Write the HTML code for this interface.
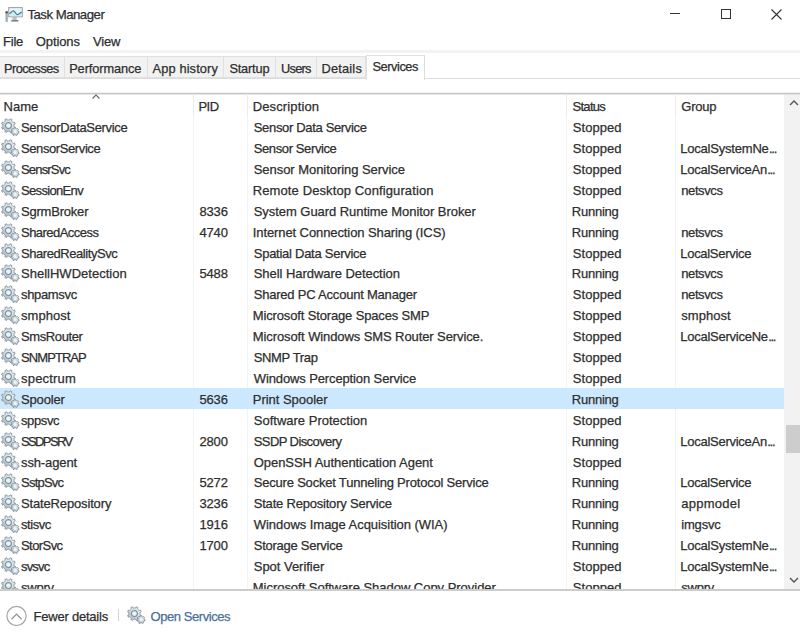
<!DOCTYPE html>
<html><head><meta charset="utf-8">
<style>
*{margin:0;padding:0;box-sizing:border-box}
html,body{width:800px;height:639px;overflow:hidden;background:#fff}
body{position:relative;font-family:"Liberation Sans",sans-serif;font-size:13px;color:#2e2e2e;-webkit-text-stroke:0.25px currentColor}
.abs{position:absolute;white-space:nowrap}
.t{position:absolute;white-space:nowrap}
#grid{position:absolute;left:0;top:0;width:784px;height:589.5px;overflow:hidden}
.row{position:absolute;left:0;width:784px;height:20.5px}
.row.sel{background:transparent}
.c{position:absolute;white-space:nowrap;font-size:13px;line-height:20px}
.el{letter-spacing:-1.25px;margin-left:0.3px}
.gi{position:absolute;left:0.3px;top:0.3px}
.vsep{position:absolute;top:94px;width:1px;height:495px;background:#f3f3f3}
.tab{position:absolute;top:56.3px;height:22.2px;background:#f2f2f2;border:1px solid #e0e0e0;border-right:none}
</style></head><body>
<svg width="0" height="0" style="position:absolute">
 <defs>
  <linearGradient id="gg" x1="1" y1="0" x2="0" y2="1">
   <stop offset="0" stop-color="#eef5f8"/><stop offset="0.5" stop-color="#d3dee4"/><stop offset="1" stop-color="#9fadb8"/>
  </linearGradient>
  <g id="gear">
   <path fill="url(#gg)" stroke="#8a98a3" stroke-width="0.9" d="M13.99,8.93 L13.89,9.69 L15.19,10.30 L14.40,12.20 L13.06,11.71 L12.12,12.79 L11.51,13.26 L12.00,14.60 L10.10,15.39 L9.49,14.09 L8.07,14.19 L7.31,14.09 L6.70,15.39 L4.80,14.60 L5.29,13.26 L4.21,12.32 L3.74,11.71 L2.40,12.20 L1.61,10.30 L2.91,9.69 L2.81,8.27 L2.91,7.51 L1.61,6.90 L2.40,5.00 L3.74,5.49 L4.68,4.41 L5.29,3.94 L4.80,2.60 L6.70,1.81 L7.31,3.11 L8.73,3.01 L9.49,3.11 L10.10,1.81 L12.00,2.60 L11.51,3.94 L12.59,4.88 L13.06,5.49 L14.40,5.00 L15.19,6.90 L13.89,7.51 Z"/>
   <circle cx="8.4" cy="8.6" r="3.0" fill="#e8f5fa" stroke="#7f8e99" stroke-width="1.1"/>
   <path fill="url(#gg)" stroke="#84929d" stroke-width="0.9" d="M18.15,14.02 L18.20,14.52 L19.10,14.73 L18.83,16.08 L17.92,15.92 L17.41,16.70 L17.06,17.05 L17.45,17.88 L16.23,18.51 L15.79,17.70 L14.86,17.80 L14.36,17.74 L13.96,18.57 L12.71,18.00 L13.07,17.15 L12.41,16.49 L12.15,16.06 L11.25,16.26 L10.91,14.93 L11.80,14.68 L11.91,13.75 L12.08,13.28 L11.36,12.70 L12.19,11.61 L12.94,12.15 L13.74,11.66 L14.21,11.50 L14.21,10.58 L15.59,10.54 L15.64,11.46 L16.51,11.78 L16.93,12.05 L17.66,11.48 L18.54,12.53 L17.85,13.14 Z"/>
   <circle cx="15.0" cy="14.6" r="1.4" fill="#eef7fa"/>
  </g>
 </defs>
</svg>

<!-- title bar -->
<svg class="abs" style="left:0;top:0" width="30" height="26" viewBox="0 0 30 26">
 <rect x="8.7" y="7.6" width="13.6" height="9.2" fill="#e4f4f8" stroke="#9c9fa2" stroke-width="1"/>
 <path d="M9.4,16.3 L9.4,13.8 C11,12.6 12,10.8 13.4,10.9 C15,11 16,14.8 17.5,14.7 C19,14.6 20,12.6 21.8,12.2 L21.8,16.3 Z" fill="#c8eef6"/>
 <path d="M9.4,13.8 C11,12.6 12,10.8 13.4,10.9 C15,11 16,14.8 17.5,14.7 C19,14.6 20,12.6 21.8,12.2" fill="none" stroke="#5d7f8c" stroke-width="1.3"/>
 <rect x="12.5" y="17" width="4.2" height="3.3" fill="#b9c0c5"/>
 <rect x="11.3" y="20" width="7" height="1.6" fill="#7c8186"/>
 <rect x="5.5" y="11.5" width="2.3" height="10.4" fill="#a6a9ac"/>
 <rect x="5.5" y="11.3" width="2.3" height="2" fill="#4d5052"/>
</svg>
<div class="abs" style="left:670px;top:12.5px;width:10px;height:1px;background:#333"></div>
<div class="abs" style="left:720.5px;top:9px;width:10px;height:10px;border:1px solid #333"></div>
<svg class="abs" style="left:771px;top:8.5px" width="11" height="11" viewBox="0 0 11 11"><path d="M0.5,0.5 L10.5,10.5 M10.5,0.5 L0.5,10.5" stroke="#333" stroke-width="1.1"/></svg>

<div class="abs" style="left:0;top:49.6px;width:800px;height:3.2px;background:#f3f3f3"></div>

<!-- tabs -->
<div class="abs" style="left:0;top:77.8px;width:800px;height:1px;background:#dcdcdc"></div>
<div class="tab" style="left:-1px;width:65px"></div>
<div class="tab" style="left:64px;width:83px"></div>
<div class="tab" style="left:146.5px;width:76.5px"></div>
<div class="tab" style="left:223px;width:52px"></div>
<div class="tab" style="left:275px;width:41px"></div>
<div class="tab" style="left:316px;width:50px;border-right:1px solid #e0e0e0"></div>
<div class="tab" style="left:365.5px;top:55px;width:59.5px;height:24.5px;background:#fff;border-right:1px solid #dcdcdc;border-bottom:none"></div>

<!-- header -->
<div class="abs" style="left:0;top:93px;width:800px;height:1px;background:#c6c6c6"></div><div class="abs" style="left:0;top:94px;width:800px;height:1px;background:#e4e4e4"></div><div class="abs" style="left:0;top:92px;width:800px;height:1px;background:#f2f2f2"></div>
<svg class="abs" style="left:91px;top:93px" width="10" height="7" viewBox="0 0 10 7"><polyline points="1.5,5.5 5,2 8.5,5.5" fill="none" stroke="#666" stroke-width="1.1"/></svg>

<div class="vsep" style="left:193px"></div>
<div class="vsep" style="left:247px"></div>
<div class="vsep" style="left:566px"></div>
<div class="vsep" style="left:675px"></div>

<div id="grid">
<div style="position:absolute;left:0;top:388.4px;width:784px;height:20.4px;background:#cce8ff"></div>
<div class="row" style="top:116.80px"><svg class="gi" width="20" height="20" viewBox="0 0 20 20"><use href="#gear"/></svg><span class="c" style="left:21.00px;top:1.40px;letter-spacing:-0.332px">SensorDataService</span><span class="c" style="left:253.75px;top:1.40px;letter-spacing:-0.333px">Sensor Data Service</span><span class="c" style="left:572.75px;top:1.40px;letter-spacing:0.050px">Stopped</span></div>
<div class="row" style="top:137.70px"><svg class="gi" width="20" height="20" viewBox="0 0 20 20"><use href="#gear"/></svg><span class="c" style="left:21.00px;top:1.40px;letter-spacing:-0.404px">SensorService</span><span class="c" style="left:253.75px;top:1.40px;letter-spacing:-0.390px">Sensor Service</span><span class="c" style="left:572.75px;top:1.40px;letter-spacing:0.050px">Stopped</span><span class="c" style="left:680.25px;top:1.40px;letter-spacing:-0.206px">LocalSystemNe<span class="el">...</span></span></div>
<div class="row" style="top:158.60px"><svg class="gi" width="20" height="20" viewBox="0 0 20 20"><use href="#gear"/></svg><span class="c" style="left:21.00px;top:1.40px;letter-spacing:-0.829px">SensrSvc</span><span class="c" style="left:253.75px;top:1.40px;letter-spacing:-0.049px">Sensor Monitoring Service</span><span class="c" style="left:572.75px;top:1.40px;letter-spacing:0.050px">Stopped</span><span class="c" style="left:680.25px;top:1.40px;letter-spacing:-0.263px">LocalServiceAn<span class="el">...</span></span></div>
<div class="row" style="top:179.50px"><svg class="gi" width="20" height="20" viewBox="0 0 20 20"><use href="#gear"/></svg><span class="c" style="left:21.00px;top:1.40px;letter-spacing:-0.663px">SessionEnv</span><span class="c" style="left:252.75px;top:1.40px;letter-spacing:0.110px">Remote Desktop Configuration</span><span class="c" style="left:572.75px;top:1.40px;letter-spacing:0.050px">Stopped</span><span class="c" style="left:681.25px;top:1.40px;letter-spacing:-0.404px">netsvcs</span></div>
<div class="row" style="top:200.40px"><svg class="gi" width="20" height="20" viewBox="0 0 20 20"><use href="#gear"/></svg><span class="c" style="left:21.00px;top:1.40px;letter-spacing:-0.209px">SgrmBroker</span><span class="c" style="left:199.40px;top:1.40px;letter-spacing:-0.128px">8336</span><span class="c" style="left:253.75px;top:1.40px;letter-spacing:-0.055px">System Guard Runtime Monitor Broker</span><span class="c" style="left:571.75px;top:1.40px;letter-spacing:-0.233px">Running</span></div>
<div class="row" style="top:221.30px"><svg class="gi" width="20" height="20" viewBox="0 0 20 20"><use href="#gear"/></svg><span class="c" style="left:21.00px;top:1.40px;letter-spacing:-0.531px">SharedAccess</span><span class="c" style="left:199.40px;top:1.40px;letter-spacing:-0.128px">4740</span><span class="c" style="left:252.75px;top:1.40px;letter-spacing:-0.095px">Internet Connection Sharing (ICS)</span><span class="c" style="left:571.75px;top:1.40px;letter-spacing:-0.233px">Running</span><span class="c" style="left:681.25px;top:1.40px;letter-spacing:-0.404px">netsvcs</span></div>
<div class="row" style="top:242.20px"><svg class="gi" width="20" height="20" viewBox="0 0 20 20"><use href="#gear"/></svg><span class="c" style="left:21.00px;top:1.40px;letter-spacing:-0.436px">SharedRealitySvc</span><span class="c" style="left:253.75px;top:1.40px;letter-spacing:-0.261px">Spatial Data Service</span><span class="c" style="left:572.75px;top:1.40px;letter-spacing:0.050px">Stopped</span><span class="c" style="left:680.25px;top:1.40px;letter-spacing:-0.291px">LocalService</span></div>
<div class="row" style="top:263.10px"><svg class="gi" width="20" height="20" viewBox="0 0 20 20"><use href="#gear"/></svg><span class="c" style="left:21.00px;top:1.40px;letter-spacing:0.010px">ShellHWDetection</span><span class="c" style="left:199.40px;top:1.40px;letter-spacing:-0.128px">5488</span><span class="c" style="left:253.75px;top:1.40px;letter-spacing:-0.056px">Shell Hardware Detection</span><span class="c" style="left:571.75px;top:1.40px;letter-spacing:-0.233px">Running</span><span class="c" style="left:681.25px;top:1.40px;letter-spacing:-0.404px">netsvcs</span></div>
<div class="row" style="top:284.00px"><svg class="gi" width="20" height="20" viewBox="0 0 20 20"><use href="#gear"/></svg><span class="c" style="left:21.00px;top:1.40px;letter-spacing:-0.331px">shpamsvc</span><span class="c" style="left:253.75px;top:1.40px;letter-spacing:-0.213px">Shared PC Account Manager</span><span class="c" style="left:572.75px;top:1.40px;letter-spacing:0.050px">Stopped</span><span class="c" style="left:681.25px;top:1.40px;letter-spacing:-0.404px">netsvcs</span></div>
<div class="row" style="top:304.90px"><svg class="gi" width="20" height="20" viewBox="0 0 20 20"><use href="#gear"/></svg><span class="c" style="left:21.00px;top:1.40px;letter-spacing:0.054px">smphost</span><span class="c" style="left:252.75px;top:1.40px;letter-spacing:-0.145px">Microsoft Storage Spaces SMP</span><span class="c" style="left:572.75px;top:1.40px;letter-spacing:0.050px">Stopped</span><span class="c" style="left:681.25px;top:1.40px;letter-spacing:0.054px">smphost</span></div>
<div class="row" style="top:325.80px"><svg class="gi" width="20" height="20" viewBox="0 0 20 20"><use href="#gear"/></svg><span class="c" style="left:21.00px;top:1.40px;letter-spacing:-0.397px">SmsRouter</span><span class="c" style="left:252.75px;top:1.40px;letter-spacing:-0.096px">Microsoft Windows SMS Router Service.</span><span class="c" style="left:572.75px;top:1.40px;letter-spacing:0.050px">Stopped</span><span class="c" style="left:680.25px;top:1.40px;letter-spacing:-0.248px">LocalServiceNe<span class="el">...</span></span></div>
<div class="row" style="top:346.70px"><svg class="gi" width="20" height="20" viewBox="0 0 20 20"><use href="#gear"/></svg><span class="c" style="left:21.00px;top:1.40px;letter-spacing:-0.921px">SNMPTRAP</span><span class="c" style="left:253.75px;top:1.40px;letter-spacing:-0.349px">SNMP Trap</span><span class="c" style="left:572.75px;top:1.40px;letter-spacing:0.050px">Stopped</span></div>
<div class="row" style="top:367.60px"><svg class="gi" width="20" height="20" viewBox="0 0 20 20"><use href="#gear"/></svg><span class="c" style="left:21.00px;top:1.40px;letter-spacing:0.202px">spectrum</span><span class="c" style="left:253.75px;top:1.40px;letter-spacing:-0.120px">Windows Perception Service</span><span class="c" style="left:572.75px;top:1.40px;letter-spacing:0.050px">Stopped</span></div>
<div class="row sel" style="top:388.50px"><svg class="gi" width="20" height="20" viewBox="0 0 20 20"><use href="#gear"/></svg><span class="c" style="left:21.00px;top:1.40px;letter-spacing:-0.155px">Spooler</span><span class="c" style="left:199.40px;top:1.40px;letter-spacing:-0.128px">5636</span><span class="c" style="left:252.75px;top:1.40px;letter-spacing:-0.024px">Print Spooler</span><span class="c" style="left:571.75px;top:1.40px;letter-spacing:-0.233px">Running</span></div>
<div class="row" style="top:409.40px"><svg class="gi" width="20" height="20" viewBox="0 0 20 20"><use href="#gear"/></svg><span class="c" style="left:21.00px;top:1.40px;letter-spacing:-0.392px">sppsvc</span><span class="c" style="left:253.75px;top:1.40px;letter-spacing:0.007px">Software Protection</span><span class="c" style="left:572.75px;top:1.40px;letter-spacing:0.050px">Stopped</span></div>
<div class="row" style="top:430.30px"><svg class="gi" width="20" height="20" viewBox="0 0 20 20"><use href="#gear"/></svg><span class="c" style="left:21.00px;top:1.40px;letter-spacing:-1.629px">SSDPSRV</span><span class="c" style="left:199.40px;top:1.40px;letter-spacing:-0.128px">2800</span><span class="c" style="left:253.75px;top:1.40px;letter-spacing:-0.587px">SSDP Discovery</span><span class="c" style="left:571.75px;top:1.40px;letter-spacing:-0.233px">Running</span><span class="c" style="left:680.25px;top:1.40px;letter-spacing:-0.263px">LocalServiceAn<span class="el">...</span></span></div>
<div class="row" style="top:451.20px"><svg class="gi" width="20" height="20" viewBox="0 0 20 20"><use href="#gear"/></svg><span class="c" style="left:21.00px;top:1.40px;letter-spacing:-0.119px">ssh-agent</span><span class="c" style="left:253.75px;top:1.40px;letter-spacing:-0.059px">OpenSSH Authentication Agent</span><span class="c" style="left:572.75px;top:1.40px;letter-spacing:0.050px">Stopped</span></div>
<div class="row" style="top:472.10px"><svg class="gi" width="20" height="20" viewBox="0 0 20 20"><use href="#gear"/></svg><span class="c" style="left:21.00px;top:1.40px;letter-spacing:-0.769px">SstpSvc</span><span class="c" style="left:199.40px;top:1.40px;letter-spacing:-0.128px">5272</span><span class="c" style="left:253.75px;top:1.40px;letter-spacing:-0.200px">Secure Socket Tunneling Protocol Service</span><span class="c" style="left:571.75px;top:1.40px;letter-spacing:-0.233px">Running</span><span class="c" style="left:680.25px;top:1.40px;letter-spacing:-0.291px">LocalService</span></div>
<div class="row" style="top:493.00px"><svg class="gi" width="20" height="20" viewBox="0 0 20 20"><use href="#gear"/></svg><span class="c" style="left:21.00px;top:1.40px;letter-spacing:-0.151px">StateRepository</span><span class="c" style="left:199.40px;top:1.40px;letter-spacing:-0.128px">3236</span><span class="c" style="left:253.75px;top:1.40px;letter-spacing:-0.206px">State Repository Service</span><span class="c" style="left:571.75px;top:1.40px;letter-spacing:-0.233px">Running</span><span class="c" style="left:681.25px;top:1.40px;letter-spacing:0.261px">appmodel</span></div>
<div class="row" style="top:513.90px"><svg class="gi" width="20" height="20" viewBox="0 0 20 20"><use href="#gear"/></svg><span class="c" style="left:21.00px;top:1.40px;letter-spacing:-0.427px">stisvc</span><span class="c" style="left:199.40px;top:1.40px;letter-spacing:-0.128px">1916</span><span class="c" style="left:253.75px;top:1.40px;letter-spacing:-0.041px">Windows Image Acquisition (WIA)</span><span class="c" style="left:571.75px;top:1.40px;letter-spacing:-0.233px">Running</span><span class="c" style="left:681.25px;top:1.40px;letter-spacing:-0.182px">imgsvc</span></div>
<div class="row" style="top:534.80px"><svg class="gi" width="20" height="20" viewBox="0 0 20 20"><use href="#gear"/></svg><span class="c" style="left:21.00px;top:1.40px;letter-spacing:-0.576px">StorSvc</span><span class="c" style="left:199.40px;top:1.40px;letter-spacing:-0.128px">1700</span><span class="c" style="left:253.75px;top:1.40px;letter-spacing:-0.256px">Storage Service</span><span class="c" style="left:571.75px;top:1.40px;letter-spacing:-0.233px">Running</span><span class="c" style="left:680.25px;top:1.40px;letter-spacing:-0.206px">LocalSystemNe<span class="el">...</span></span></div>
<div class="row" style="top:555.70px"><svg class="gi" width="20" height="20" viewBox="0 0 20 20"><use href="#gear"/></svg><span class="c" style="left:21.00px;top:1.40px;letter-spacing:-0.825px">svsvc</span><span class="c" style="left:253.75px;top:1.40px;letter-spacing:-0.026px">Spot Verifier</span><span class="c" style="left:572.75px;top:1.40px;letter-spacing:0.050px">Stopped</span><span class="c" style="left:680.25px;top:1.40px;letter-spacing:-0.206px">LocalSystemNe<span class="el">...</span></span></div>
<div class="row" style="top:576.60px"><svg class="gi" width="20" height="20" viewBox="0 0 20 20"><use href="#gear"/></svg><span class="c" style="left:21.00px;top:1.40px;letter-spacing:-0.211px">swprv</span><span class="c" style="left:252.75px;top:1.40px;letter-spacing:-0.029px">Microsoft Software Shadow Copy Provider</span><span class="c" style="left:572.75px;top:1.40px;letter-spacing:0.050px">Stopped</span><span class="c" style="left:681.25px;top:1.40px;letter-spacing:-0.211px">swprv</span></div>
</div>
<div class="vsep" style="left:193px;top:94px;height:22px;background:#ececec"></div>
<div class="vsep" style="left:247px;top:94px;height:22px;background:#ececec"></div>
<div class="vsep" style="left:566px;top:94px;height:22px;background:#ececec"></div>
<div class="vsep" style="left:675px;top:94px;height:22px;background:#ececec"></div>

<!-- scrollbar -->
<div class="abs" style="left:784px;top:94.5px;width:16px;height:495px;background:#f2f2f2"></div>
<div class="abs" style="left:785.5px;top:425px;width:14.5px;height:28px;background:#cdcdcd"></div>
<svg class="abs" style="left:789px;top:99px" width="10" height="8" viewBox="0 0 10 8"><polyline points="1,6 5,2 9,6" fill="none" stroke="#555" stroke-width="1.4"/></svg>
<svg class="abs" style="left:789px;top:576px" width="10" height="8" viewBox="0 0 10 8"><polyline points="1,2 5,6 9,2" fill="none" stroke="#555" stroke-width="1.4"/></svg>

<!-- footer -->
<div class="abs" style="left:0;top:589.4px;width:800px;height:1.3px;background:#cccccc"></div>
<div class="abs" style="left:0;top:590.5px;width:800px;height:48.5px;background:#fff"></div>
<svg class="abs" style="left:0;top:600px" width="30" height="32" viewBox="0 600 30 32"><circle cx="16.5" cy="616" r="9.6" fill="none" stroke="#a6a6a6" stroke-width="1.2"/><polyline points="11.4,619.3 16.5,614.2 21.6,619.3" fill="none" stroke="#8a8a8a" stroke-width="1.2"/></svg>
<div class="abs" style="left:117.5px;top:609px;width:1px;height:12px;background:#d5d5d5"></div>
<svg class="abs" style="left:126px;top:605.4px" width="20" height="20" viewBox="0 0 20 20"><use href="#gear"/></svg>

<div class="t" style="left:27.40px;top:5.43px;font-size:13.2px;line-height:20px;letter-spacing:-0.494px;">Task Manager</div>
<div class="t" style="left:2.90px;top:31.80px;font-size:13px;line-height:20px;letter-spacing:-0.172px;">File</div>
<div class="t" style="left:35.80px;top:31.80px;font-size:13px;line-height:20px;letter-spacing:-0.100px;">Options</div>
<div class="t" style="left:93.00px;top:31.80px;font-size:13px;line-height:20px;letter-spacing:-0.185px;">View</div>
<div class="t" style="left:4.00px;top:58.66px;font-size:12.8px;line-height:20px;letter-spacing:-0.574px;">Processes</div>
<div class="t" style="left:69.20px;top:58.66px;font-size:12.8px;line-height:20px;letter-spacing:-0.104px;">Performance</div>
<div class="t" style="left:152.50px;top:58.66px;font-size:12.8px;line-height:20px;letter-spacing:0.138px;">App history</div>
<div class="t" style="left:229.40px;top:58.66px;font-size:12.8px;line-height:20px;letter-spacing:-0.190px;">Startup</div>
<div class="t" style="left:281.00px;top:58.66px;font-size:12.8px;line-height:20px;letter-spacing:-0.755px;">Users</div>
<div class="t" style="left:321.60px;top:58.66px;font-size:12.8px;line-height:20px;letter-spacing:0.180px;">Details</div>
<div class="t" style="left:372.50px;top:57.16px;font-size:12.8px;line-height:20px;letter-spacing:-0.453px;">Services</div>
<div class="t" style="left:3.60px;top:96.70px;font-size:13px;line-height:20px;letter-spacing:0.018px;">Name</div>
<div class="t" style="left:198.40px;top:96.70px;font-size:13px;line-height:20px;letter-spacing:-0.466px;">PID</div>
<div class="t" style="left:252.75px;top:96.70px;font-size:13px;line-height:20px;letter-spacing:0.120px;">Description</div>
<div class="t" style="left:572.50px;top:96.70px;font-size:13px;line-height:20px;letter-spacing:-0.711px;">Status</div>
<div class="t" style="left:681.25px;top:96.70px;font-size:13px;line-height:20px;letter-spacing:-0.225px;">Group</div>
<div class="t" style="left:33.50px;top:607.00px;font-size:13px;line-height:20px;letter-spacing:-0.217px;">Fewer details</div>
<div class="t" style="left:150.60px;top:607.00px;font-size:13px;line-height:20px;letter-spacing:-0.447px;color:#48709a">Open Services</div>
</body></html>
